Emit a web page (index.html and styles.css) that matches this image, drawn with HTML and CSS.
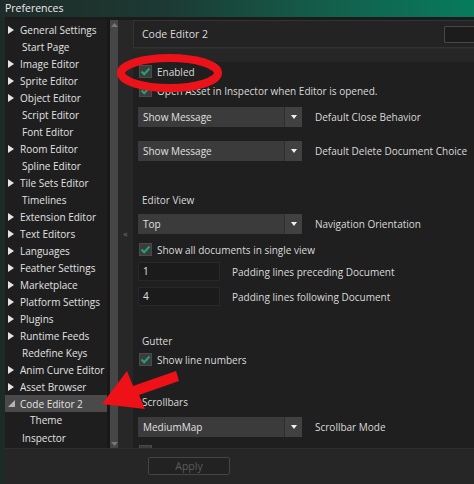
FILE: index.html
```html
<!DOCTYPE html>
<html>
<head>
<meta charset="utf-8">
<title>Preferences</title>
<link rel="stylesheet" href="styles.css">
</head>
<body>
<div class="titlebar">Preferences</div>
<div class="frame">
  <div class="edge"></div>
  <div class="main">
    <div class="panes">
      <div class="tree">
        <div class="item"><span class="tw"><svg width="6" height="8" viewBox="0 0 6 8"><polygon points="0,0 6,4 0,8" fill="#e4e4e4"/></svg></span>General Settings</div>
        <div class="item leaf">Start Page</div>
        <div class="item"><span class="tw"><svg width="6" height="8" viewBox="0 0 6 8"><polygon points="0,0 6,4 0,8" fill="#e4e4e4"/></svg></span>Image Editor</div>
        <div class="item"><span class="tw"><svg width="6" height="8" viewBox="0 0 6 8"><polygon points="0,0 6,4 0,8" fill="#e4e4e4"/></svg></span>Sprite Editor</div>
        <div class="item"><span class="tw"><svg width="6" height="8" viewBox="0 0 6 8"><polygon points="0,0 6,4 0,8" fill="#e4e4e4"/></svg></span>Object Editor</div>
        <div class="item leaf">Script Editor</div>
        <div class="item leaf">Font Editor</div>
        <div class="item"><span class="tw"><svg width="6" height="8" viewBox="0 0 6 8"><polygon points="0,0 6,4 0,8" fill="#e4e4e4"/></svg></span>Room Editor</div>
        <div class="item leaf">Spline Editor</div>
        <div class="item"><span class="tw"><svg width="6" height="8" viewBox="0 0 6 8"><polygon points="0,0 6,4 0,8" fill="#e4e4e4"/></svg></span>Tile Sets Editor</div>
        <div class="item leaf">Timelines</div>
        <div class="item"><span class="tw"><svg width="6" height="8" viewBox="0 0 6 8"><polygon points="0,0 6,4 0,8" fill="#e4e4e4"/></svg></span>Extension Editor</div>
        <div class="item"><span class="tw"><svg width="6" height="8" viewBox="0 0 6 8"><polygon points="0,0 6,4 0,8" fill="#e4e4e4"/></svg></span>Text Editors</div>
        <div class="item"><span class="tw"><svg width="6" height="8" viewBox="0 0 6 8"><polygon points="0,0 6,4 0,8" fill="#e4e4e4"/></svg></span>Languages</div>
        <div class="item"><span class="tw"><svg width="6" height="8" viewBox="0 0 6 8"><polygon points="0,0 6,4 0,8" fill="#e4e4e4"/></svg></span>Feather Settings</div>
        <div class="item"><span class="tw"><svg width="6" height="8" viewBox="0 0 6 8"><polygon points="0,0 6,4 0,8" fill="#e4e4e4"/></svg></span>Marketplace</div>
        <div class="item"><span class="tw"><svg width="6" height="8" viewBox="0 0 6 8"><polygon points="0,0 6,4 0,8" fill="#e4e4e4"/></svg></span>Platform Settings</div>
        <div class="item"><span class="tw"><svg width="6" height="8" viewBox="0 0 6 8"><polygon points="0,0 6,4 0,8" fill="#e4e4e4"/></svg></span>Plugins</div>
        <div class="item"><span class="tw"><svg width="6" height="8" viewBox="0 0 6 8"><polygon points="0,0 6,4 0,8" fill="#e4e4e4"/></svg></span>Runtime Feeds</div>
        <div class="item leaf">Redefine Keys</div>
        <div class="item"><span class="tw"><svg width="6" height="8" viewBox="0 0 6 8"><polygon points="0,0 6,4 0,8" fill="#e4e4e4"/></svg></span>Anim Curve Editor</div>
        <div class="item"><span class="tw"><svg width="6" height="8" viewBox="0 0 6 8"><polygon points="0,0 6,4 0,8" fill="#e4e4e4"/></svg></span>Asset Browser</div>
        <div class="item selected"><span class="tw"><svg width="7" height="7" viewBox="0 0 7 7"><polygon points="7,0 7,7 0,7" fill="#b4b4b4"/></svg></span>Code Editor 2</div>
        <div class="item child">Theme</div>
        <div class="item leaf last">Inspector</div>
      </div>
      <div class="vscroll">
        <svg width="7" height="4" viewBox="0 0 7 4"><polygon points="0,4 3.5,0 7,4" fill="#777"/></svg>
        <svg width="7" height="4" viewBox="0 0 7 4"><polygon points="0,0 3.5,4 7,0" fill="#777"/></svg>
      </div>
      <div class="splitter">«</div>
      <div class="content">
        <div class="header"><span>Code Editor 2</span><div class="search"></div></div>
        <div class="band"></div>
        <div class="body">
          <div class="check"><span class="cb"><svg width="11" height="11" viewBox="0 0 11 11"><polyline points="1.5,5.5 4.2,8.2 9.5,2.5" fill="none" stroke="#22a37b" stroke-width="2"/></svg></span>Enabled</div>
          <div class="check"><span class="cb"><svg width="11" height="11" viewBox="0 0 11 11"><polyline points="1.5,5.5 4.2,8.2 9.5,2.5" fill="none" stroke="#22a37b" stroke-width="2"/></svg></span>Open Asset in Inspector when Editor is opened.</div>
          <div class="drop-row m-drop1"><div class="drop"><span class="val">Show Message</span><span class="arr"><svg width="6" height="4" viewBox="0 0 6 4"><polygon points="0,0 6,0 3,4" fill="#f0f0f0"/></svg></span></div><span class="drop-label">Default Close Behavior</span></div>
          <div class="drop-row m-drop2"><div class="drop"><span class="val">Show Message</span><span class="arr"><svg width="6" height="4" viewBox="0 0 6 4"><polygon points="0,0 6,0 3,4" fill="#f0f0f0"/></svg></span></div><span class="drop-label">Default Delete Document Choice</span></div>

          <div class="heading m-editorview">Editor View</div>
          <div class="drop-row m-drop3"><div class="drop"><span class="val">Top</span><span class="arr"><svg width="6" height="4" viewBox="0 0 6 4"><polygon points="0,0 6,0 3,4" fill="#f0f0f0"/></svg></span></div><span class="drop-label">Navigation Orientation</span></div>
          <div class="check m-showall"><span class="cb"><svg width="11" height="11" viewBox="0 0 11 11"><polyline points="1.5,5.5 4.2,8.2 9.5,2.5" fill="none" stroke="#22a37b" stroke-width="2"/></svg></span>Show all documents in single view</div>
          <div class="num-row m-num1"><span class="num">1</span><span class="num-label">Padding lines preceding Document</span></div>
          <div class="num-row m-num2"><span class="num">4</span><span class="num-label">Padding lines following Document</span></div>

          <div class="heading m-gutter">Gutter</div>
          <div class="check"><span class="cb"><svg width="11" height="11" viewBox="0 0 11 11"><polyline points="1.5,5.5 4.2,8.2 9.5,2.5" fill="none" stroke="#22a37b" stroke-width="2"/></svg></span>Show line numbers</div>

          <div class="heading m-scroll">Scrollbars</div>
          <div class="drop-row m-drop4"><div class="drop"><span class="val">MediumMap</span><span class="arr"><svg width="6" height="4" viewBox="0 0 6 4"><polygon points="0,0 6,0 3,4" fill="#f0f0f0"/></svg></span></div><span class="drop-label">Scrollbar Mode</span></div>
          <div class="check m-last"><span class="cb empty"></span>Show changes and annotations on scrollbar</div>
        </div>
      </div>
    </div>
    <div class="footer"><button class="apply" disabled>Apply</button></div>
  </div>
</div>
<svg class="annot" width="474" height="484" viewBox="0 0 474 484">
  <ellipse cx="169.5" cy="73" rx="48.5" ry="15" fill="none" stroke="#ec1219" stroke-width="8"/>
  <polygon points="102,404 127,371 133,386 176,371 179,381 139,395 145,409" fill="#ee1118"/>
</svg>
</body>
</html>
```

FILE: styles.css
```css
* { box-sizing: border-box; margin: 0; padding: 0; }
html, body { width: 474px; height: 484px; overflow: hidden; background: #262626; }
body {
  font-family: "Open Sans", "Noto Sans", sans-serif;
  font-size: 10px;
  color: #dadada;
  position: relative;
}

.titlebar {
  height: 17px;
  line-height: 17px;
  padding-left: 5px;
  font-size: 10.5px;
  color: #ececec;
  background: linear-gradient(90deg, #1f2b28 0%, #1c3a33 35%, #13604c 70%, #077b5d 100%);
}

.frame { display: flex; height: 467px; }
.edge { width: 5px; background: #1c2b28; }
.main {
  flex: 1;
  display: flex;
  flex-direction: column;
  padding-top: 3px;
  background: #1b1b1b;
}

.panes { display: flex; height: 428px; }

.tree {
  width: 102px;
  background: #1e1e1e;
  padding-top: 1px;
  color: #e2e2e2;
  overflow: hidden;
}
.item {
  height: 17px;
  display: flex;
  align-items: center;
  padding-left: 3px;
  white-space: nowrap;
}
.item .tw { width: 12px; display: flex; align-items: center; }
.item.leaf { padding-left: 17px; }
.item.child { padding-left: 25px; height: 15px; }
.item.last { margin-top: 2px; }
.item.selected { background: #4a4a4a; }

.vscroll {
  width: 11px;
  border-left: 3px solid #181818;
  background: #464646;
  display: flex;
  flex-direction: column;
  justify-content: space-between;
  align-items: center;
  padding: 3px 0 2px;
}

.splitter {
  width: 15px;
  background: #272727;
  display: flex;
  align-items: center;
  justify-content: center;
  color: #6c6c6c;
  font-size: 9px;
  padding-bottom: 1px;
}

.content {
  flex: 1;
  background: #1f1f1f;
  overflow: hidden;
}
.header {
  height: 28px;
  display: flex;
  align-items: center;
  padding-left: 8px;
  background: #232323;
  border: 1px solid #333333;
  border-right: none;
  color: #dcdcdc;
  font-size: 10.5px;
}
.search {
  margin-left: auto;
  width: 30px;
  height: 17px;
  border: 1px solid #474747;
  border-right: none;
  border-radius: 2px 0 0 2px;
  background: #1c1c1c;
}
.band { height: 14px; background: #262626; border-top: 1px solid #2c2c2c; }

.body { padding-left: 5px; }

.check {
  display: flex;
  align-items: center;
  height: 19px;
  padding-left: 1px;
  white-space: nowrap;
}
.cb {
  width: 13px;
  height: 13px;
  background: #3c3c3c;
  border: 1px solid #4a4a4a;
  margin-right: 5px;
  display: flex;
  align-items: center;
  justify-content: center;
  flex: none;
}

.drop-row { display: flex; align-items: center; height: 20px; white-space: nowrap; }
.drop { width: 164px; height: 20px; background: #3b3b3b; display: flex; flex: none; }
.drop .val { flex: 1; padding-left: 5px; line-height: 20px; color: #e0e0e0; }
.drop .arr {
  width: 18px;
  border-left: 1px solid #2e2e2e;
  background: #414141;
  display: flex;
  align-items: center;
  justify-content: center;
}
.drop-label { margin-left: 13px; }

.heading { height: 17px; line-height: 17px; padding-left: 4px; }

.num-row { display: flex; align-items: center; height: 19px; white-space: nowrap; }
.num {
  width: 82px;
  height: 19px;
  line-height: 17px;
  padding-left: 4px;
  background: #1b1b1b;
  border: 1px solid #282828;
  color: #e0e0e0;
}
.num-label { margin-left: 12px; }

.m-drop1 { margin-top: 7px; }
.m-drop2 { margin-top: 14px; }
.m-editorview { margin-top: 31px; }
.m-drop3 { margin-top: 5px; }
.m-showall { margin-top: 6px; }
.m-num1 { margin-top: 3px; }
.m-num2 { margin-top: 6px; }
.m-gutter { margin-top: 27px; }
.m-scroll { margin-top: 25px; }
.m-drop4 { margin-top: 6px; }
.m-last { margin-top: 5px; }

.footer {
  height: 36px;
  background: #262626;
  border-top: 1px solid #2e2e2e;
  padding: 8px 0 0 143px;
}
.apply {
  width: 82px;
  height: 18px;
  background: #222222;
  border: 1px solid #454545;
  border-radius: 2px;
  color: #5c5c5c;
  font-family: "Open Sans", "Noto Sans", sans-serif;
  font-size: 10.5px;
}

.annot { position: absolute; left: 0; top: 0; pointer-events: none; }
```
